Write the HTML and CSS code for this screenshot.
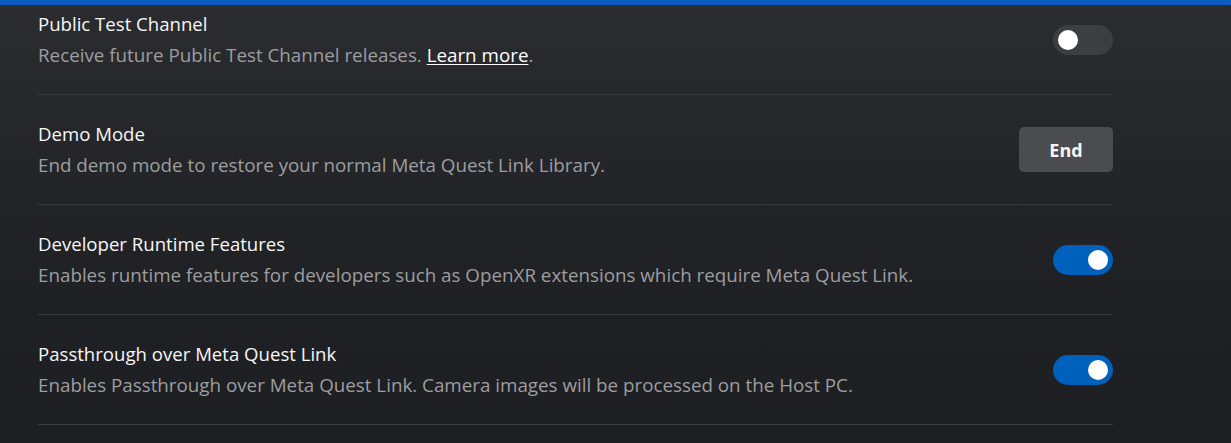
FILE: index.html
```html
<!DOCTYPE html>
<html lang="en">
<head>
<meta charset="utf-8">
<title>Settings</title>
<link rel="stylesheet" href="styles.css">
</head>
<body>
<div class="topbar"></div>
<div class="viewport">
  <div class="list">
    <div class="row">
      <div class="text">
        <div class="title">Public Test Channel</div>
        <div class="desc">Receive future Public Test Channel releases. <a class="link" href="#">Learn more</a>.</div>
      </div>
      <div class="toggle"><span class="knob"></span></div>
    </div>
    <div class="row">
      <div class="text">
        <div class="title">Demo Mode</div>
        <div class="desc">End demo mode to restore your normal Meta Quest Link Library.</div>
      </div>
      <button class="btn">End</button>
    </div>
    <div class="row">
      <div class="text">
        <div class="title">Developer Runtime Features</div>
        <div class="desc">Enables runtime features for developers such as OpenXR extensions which require Meta Quest Link.</div>
      </div>
      <div class="toggle on"><span class="knob"></span></div>
    </div>
    <div class="row">
      <div class="text">
        <div class="title">Passthrough over Meta Quest Link</div>
        <div class="desc">Enables Passthrough over Meta Quest Link. Camera images will be processed on the Host PC.</div>
      </div>
      <div class="toggle on"><span class="knob"></span></div>
    </div>
  </div>
</div>
</body>
</html>
```
FILE: styles.css
```css
html, body {
  margin: 0;
  padding: 0;
  height: 100%;
}
body {
  background: linear-gradient(180deg, #2b2c2f 0%, #232427 45%, #1f2023 70%, #1e1f22 100%);
  font-family: "Open Sans", "Noto Sans", sans-serif;
  color: #f2f2f2;
  display: flex;
  flex-direction: column;
  overflow: hidden;
}
.topbar {
  height: 5px;
  background: #0a5cbf;
  flex: none;
}
.viewport {
  flex: 1;
  overflow: hidden;
}
.list {
  margin-top: -20px;
  margin-left: 38px;
  width: 1075px;
}
.row {
  height: 109px;
  border-bottom: 1px solid #3a3b3e;
  display: flex;
  align-items: center;
  justify-content: space-between;
}
.text {
  display: flex;
  flex-direction: column;
  gap: 7px;
}
.title {
  font-size: 18.6px;
  line-height: 24px;
  color: #f6f6f6;
}
.desc {
  font-size: 18.8px;
  line-height: 24px;
  color: #9d9ea0;
}
.link {
  color: #ffffff;
  text-decoration: underline;
  text-underline-offset: 2px;
}
.toggle {
  width: 60px;
  height: 30px;
  border-radius: 15px;
  background: #3d3e41;
  display: flex;
  align-items: center;
  padding: 0 5px;
  box-sizing: border-box;
}
.toggle .knob {
  width: 20px;
  height: 20px;
  border-radius: 50%;
  background: #ffffff;
}
.toggle.on {
  background: #0061bc;
  justify-content: flex-end;
}
.btn {
  width: 94px;
  height: 45px;
  border: none;
  border-radius: 5px;
  background: #4b4c4f;
  color: #f5f5f5;
  font-family: "Open Sans", "Noto Sans", sans-serif;
  font-size: 18px;
  font-weight: 700;
  padding: 0;
}
```
